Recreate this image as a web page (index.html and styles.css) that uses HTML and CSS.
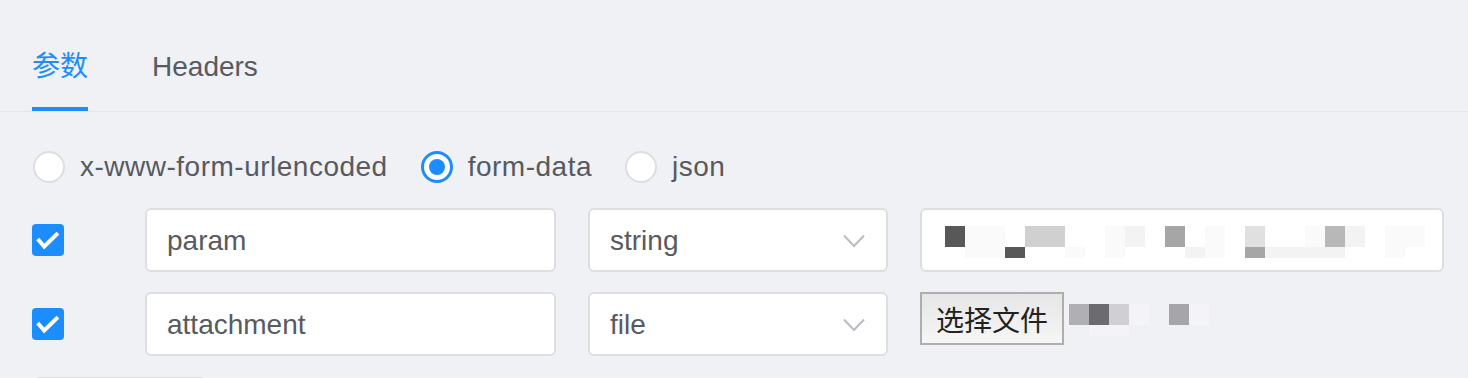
FILE: index.html
```html
<!DOCTYPE html>
<html lang="zh">
<head>
<meta charset="utf-8">
<title>参数</title>
<link rel="stylesheet" href="styles.css">
</head>
<body>
<div class="tabs">
  <div class="tab active">参数</div>
  <div class="tab">Headers</div>
</div>
<div class="radios">
  <label class="radio"><span class="dot"></span><span class="rlabel">x-www-form-urlencoded</span></label>
  <label class="radio checked"><span class="dot"></span><span class="rlabel">form-data</span></label>
  <label class="radio"><span class="dot"></span><span class="rlabel">json</span></label>
</div>
<div class="row">
  <div class="cb-cell"><span class="cb"><svg viewBox="0 0 32 32" width="32" height="32"><path d="M7 16.5 L12.2 22.5 L24.5 10.5" fill="none" stroke="#fff" stroke-width="4" stroke-linecap="square"/></svg></span></div>
  <div class="field name">param</div>
  <div class="field select"><span>string</span><svg class="arrow" viewBox="0 0 22 14" width="22" height="14"><path d="M1 1.5 L11 12 L21 1.5" fill="none" stroke="#b9bcc2" stroke-width="2"/></svg></div>
  <div class="field value">
    <div class="mosaic">
      <div class="mrow r1">
        <i class="c5"></i><i class="c0"></i><i class="c0"></i><i class="w"></i><i class="c2"></i><i class="c2"></i><i class="w"></i><i class="w"></i><i class="c0"></i><i class="c1"></i><i class="w"></i><i class="c3"></i><i class="w"></i><i class="c0"></i><i class="w"></i><i class="c1b"></i><i class="w"></i><i class="w"></i><i class="c0"></i><i class="c2b"></i><i class="c1"></i><i class="w"></i><i class="c0"></i><i class="c0"></i>
      </div>
      <div class="mrow r2">
        <i class="w"></i><i class="c0"></i><i class="c0"></i><i class="c5"></i><i class="w"></i><i class="w"></i><i class="c0"></i><i class="w"></i><i class="c0"></i><i class="w"></i><i class="w"></i><i class="w"></i><i class="c1"></i><i class="c0"></i><i class="w"></i><i class="c3"></i><i class="c1"></i><i class="c1"></i><i class="c1"></i><i class="c1"></i><i class="w"></i><i class="w"></i><i class="c0"></i><i class="w"></i>
      </div>
    </div>
  </div>
</div>
<div class="row">
  <div class="cb-cell"><span class="cb"><svg viewBox="0 0 32 32" width="32" height="32"><path d="M7 16.5 L12.2 22.5 L24.5 10.5" fill="none" stroke="#fff" stroke-width="4" stroke-linecap="square"/></svg></span></div>
  <div class="field name">attachment</div>
  <div class="field select"><span>file</span><svg class="arrow" viewBox="0 0 22 14" width="22" height="14"><path d="M1 1.5 L11 12 L21 1.5" fill="none" stroke="#b9bcc2" stroke-width="2"/></svg></div>
  <div class="file">
    <button class="filebtn" type="button">选择文件</button>
    <div class="mosaic small">
      <div class="mrow r1">
        <i class="f1"></i><i class="f5"></i><i class="f2"></i><i class="f0"></i><i class="bg"></i><i class="f3"></i><i class="f0"></i>
      </div>
      <div class="mrow r2">
        <i class="bg"></i><i class="f0"></i><i class="f0"></i><i class="bg"></i><i class="bg"></i><i class="bg"></i><i class="bg"></i>
      </div>
    </div>
  </div>
</div>
<div class="bottom">
  <div class="addbtn"></div>
</div>
</body>
</html>
```

FILE: styles.css
```css
html, body {
  margin: 0;
  padding: 0;
  background: #f0f1f5;
  overflow: hidden;
}
body {
  font-family: "Liberation Sans", "Noto Sans CJK SC", sans-serif;
  color: #575a60;
  width: 1468px;
  height: 378px;
}
.tabs {
  display: flex;
  align-items: flex-end;
  padding-left: 32px;
  border-bottom: 1px solid #e4e6ea;
  box-sizing: border-box;
  height: 112px;
}
.tab {
  font-size: 28px;
  line-height: 32px;
  padding-bottom: 24px;
  border-bottom: 4px solid transparent;
  color: #575a60;
}
.tab.active {
  color: #1c8dff;
  border-bottom-color: #1c8dff;
}
.tab + .tab {
  margin-left: 64px;
}
.radios {
  display: flex;
  align-items: center;
  padding-left: 33px;
  margin-top: 39px;
  height: 32px;
}
.radio {
  display: flex;
  align-items: center;
  margin-right: 33px;
}
.dot {
  width: 32px;
  height: 32px;
  box-sizing: border-box;
  border: 2px solid #dcdee2;
  border-radius: 50%;
  background: #fff;
  display: flex;
  align-items: center;
  justify-content: center;
}
.radio.checked .dot {
  border: 3px solid #1c8dff;
}
.radio.checked .dot::after {
  content: "";
  width: 16px;
  height: 16px;
  border-radius: 50%;
  background: #1c8dff;
}
.rlabel {
  font-size: 28px;
  line-height: 32px;
  margin-left: 15px;
  letter-spacing: 0.5px;
}
.row {
  display: flex;
  align-items: stretch;
  height: 64px;
  margin-top: 25px;
}
.row + .row {
  margin-top: 20px;
}
.cb-cell {
  width: 145px;
  padding-left: 32px;
  box-sizing: border-box;
  display: flex;
  align-items: center;
}
.cb {
  width: 32px;
  height: 32px;
  border-radius: 4px;
  background: #1c8dff;
  display: block;
}
.cb svg {
  display: block;
}
.field {
  box-sizing: border-box;
  background: #fff;
  border: 2px solid #dcdee2;
  border-radius: 6px;
  display: flex;
  align-items: center;
  font-size: 28px;
  padding-top: 2px;
}
.name {
  width: 411px;
  padding-left: 20px;
}
.select {
  width: 300px;
  margin-left: 32px;
  padding-left: 20px;
  padding-right: 21px;
  justify-content: space-between;
}
.arrow {
  display: block;
}
.value {
  width: 524px;
  margin-left: 32px;
  padding-left: 23px;
  align-items: flex-start;
  padding-top: 16px;
}
.mosaic {
  display: flex;
  flex-direction: column;
}
.mrow {
  display: flex;
}
.mrow i {
  display: block;
  width: 20px;
}
.mrow.r1 i { height: 21px; }
.mrow.r2 i { height: 11px; }
.w { background: #fff; }
.c0 { background: #fafafa; }
.c1 { background: #f3f3f3; }
.c1b { background: #e0e0e0; }
.c2 { background: #d0d0d0; }
.c2b { background: #b8b8b8; }
.c3 { background: #a6a6a6; }
.c5 { background: #585858; }
.file {
  margin-left: 32px;
  display: flex;
  align-items: flex-start;
}
.filebtn {
  height: 53px;
  box-sizing: border-box;
  border: 2px solid #aeaeae;
  border-radius: 0;
  background: linear-gradient(#e6e6e6, #f6f6f6);
  font-family: "Noto Sans CJK SC", sans-serif;
  font-size: 28px;
  color: #222;
  padding: 0 14px;
  margin: 0;
  line-height: 1;
}
.mosaic.small {
  margin-left: 5px;
  margin-top: 12px;
}
.bg { background: #f0f1f5; }
.f0 { background: #f4f4f8; }
.f1 { background: #b0b0b4; }
.f2 { background: #d0d0d4; }
.f3 { background: #a6a6aa; }
.f5 { background: #6c6c70; }
.bottom {
  padding-left: 33px;
  margin-top: 21px;
  height: 2px;
  overflow: hidden;
}
.addbtn {
  width: 174px;
  height: 64px;
  box-sizing: border-box;
  border: 2px solid #dcdee2;
  border-radius: 6px;
  background: #fff;
}
```
